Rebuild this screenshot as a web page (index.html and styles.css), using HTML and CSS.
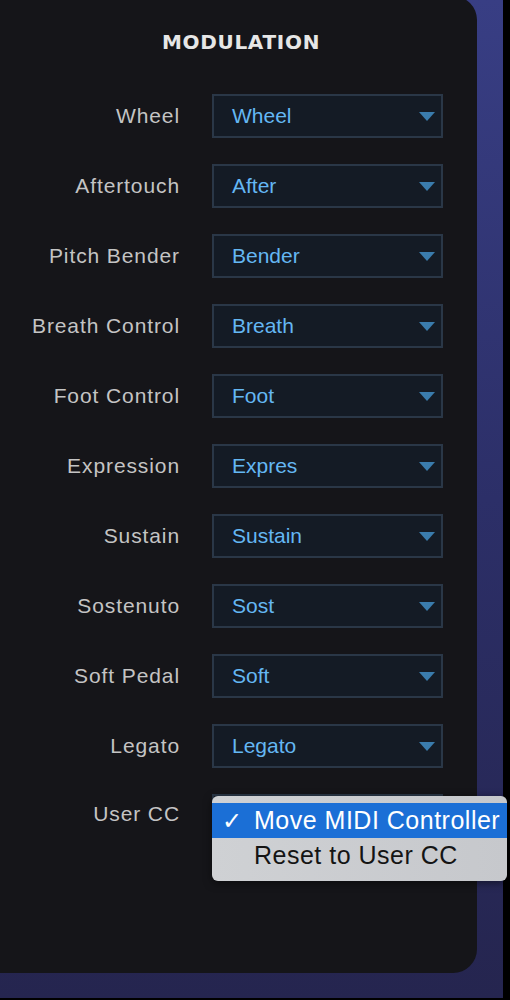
FILE: index.html
```html
<!DOCTYPE html>
<html>
<head>
<meta charset="utf-8">
<link rel="stylesheet" href="styles.css">
</head>
<body>
<div class="screen">
  <div class="panel">
    <h1 class="title">MODULATION</h1>
    <div class="rows">
      <div class="label">Wheel</div>
      <div class="select"><span>Wheel</span><i class="arrow"></i></div>
      <div class="label">Aftertouch</div>
      <div class="select"><span>After</span><i class="arrow"></i></div>
      <div class="label">Pitch Bender</div>
      <div class="select"><span>Bender</span><i class="arrow"></i></div>
      <div class="label">Breath Control</div>
      <div class="select"><span>Breath</span><i class="arrow"></i></div>
      <div class="label">Foot Control</div>
      <div class="select"><span>Foot</span><i class="arrow"></i></div>
      <div class="label">Expression</div>
      <div class="select"><span>Expres</span><i class="arrow"></i></div>
      <div class="label">Sustain</div>
      <div class="select"><span>Sustain</span><i class="arrow"></i></div>
      <div class="label">Sostenuto</div>
      <div class="select"><span>Sost</span><i class="arrow"></i></div>
      <div class="label">Soft Pedal</div>
      <div class="select"><span>Soft</span><i class="arrow"></i></div>
      <div class="label">Legato</div>
      <div class="select"><span>Legato</span><i class="arrow"></i></div>
      <div class="label label-user">User CC</div>
      <div class="select select-open">
        <div class="menu">
          <div class="menu-item active"><span class="check">✓</span>Move MIDI Controller</div>
          <div class="menu-item"><span class="check"></span>Reset to User CC</div>
        </div>
      </div>
    </div>
  </div>
</div>
</body>
</html>
```
FILE: styles.css
```css
html, body {
  margin: 0;
  padding: 0;
  background: #000;
}
.screen {
  display: flex;
  align-items: flex-start;
  width: 503px;
  height: 998px;
  background: linear-gradient(180deg, #383e84 0%, #2c2f68 50%, #25254f 100%);
}
.panel {
  width: 477px;
  height: 977px;
  margin-top: -4px;
  background: #151519;
  border-radius: 0 24px 24px 0;
  box-sizing: border-box;
  padding-top: 34px;
}
.title {
  margin: 0;
  text-align: center;
  font-family: "DejaVu Sans", sans-serif;
  font-weight: bold;
  font-size: 20px;
  line-height: 24px;
  letter-spacing: 0.7px;
  color: #e6e6e6;
  padding-left: 5px;
}
.rows {
  display: grid;
  grid-template-columns: 179px 231px;
  column-gap: 33px;
  row-gap: 26px;
  margin-top: 40px;
}
.label {
  display: flex;
  align-items: center;
  justify-content: flex-end;
  font-family: "Liberation Sans", Arial, sans-serif;
  font-size: 21px;
  letter-spacing: 0.9px;
  color: #c4c4c4;
  margin-right: -1px;
}
.label-user {
  align-items: flex-start;
  padding-top: 8px;
}
.select {
  position: relative;
  height: 44px;
  box-sizing: border-box;
  border: 2px solid #2a3747;
  background: #141b25;
  display: flex;
  align-items: center;
  justify-content: space-between;
  padding: 0 6px 0 18px;
  font-family: "Liberation Sans", Arial, sans-serif;
  font-size: 21px;
  color: #64b7f3;
}
.arrow {
  width: 0;
  height: 0;
  border-left: 8px solid transparent;
  border-right: 8px solid transparent;
  border-top: 9px solid #3a7cad;
  margin-top: 1px;
}
.menu {
  position: absolute;
  left: -2px;
  top: 0px;
  width: 295px;
  box-sizing: border-box;
  padding: 7px 0 8px;
  background: linear-gradient(90deg, #cfd1d4 0%, #c6c8cc 100%);
  border-radius: 6px;
  box-shadow: 0 2px 8px rgba(0, 0, 0, 0.5);
  z-index: 2;
}
.menu-item {
  height: 35px;
  display: flex;
  align-items: center;
  font-family: "Liberation Sans", Arial, sans-serif;
  font-size: 25px;
  letter-spacing: 0.5px;
  color: #141414;
  white-space: nowrap;
}
.menu-item.active {
  background: #1b6fd6;
  color: #ffffff;
}
.check {
  display: inline-block;
  width: 32px;
  padding-left: 10px;
  font-family: "DejaVu Sans", sans-serif;
  font-size: 24px;
  font-weight: bold;
}
```
